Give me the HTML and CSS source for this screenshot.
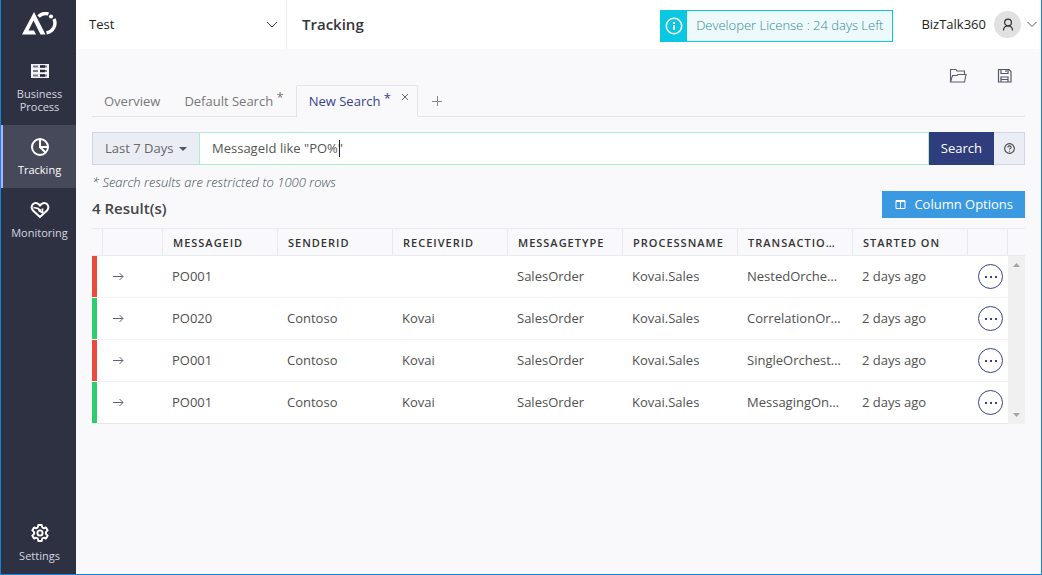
FILE: index.html
```html
<!DOCTYPE html>
<html lang="en">
<head>
<meta charset="utf-8">
<title>Tracking</title>
<link rel="stylesheet" href="styles.css">
</head>
<body>
<div class="app">
  <nav class="sidebar">
    <a class="logo" href="#" aria-label="Home">
      <svg width="36" height="24" viewBox="0 0 36 24" fill="none" stroke="#fff">
        <path d="M12 0L23.500 22.500H18.500L11.500 8.500L6.500 18.500H12L14 22.500H0Z" fill="#fff" stroke="none"/>
        <path d="M16.500 4.500A9.800 9.800 0 0 1 26.500 2M32 7A9.800 9.800 0 0 1 24.500 20.800" stroke-width="3.400"/>
        <circle cx="29" cy="4.500" r="2.100" fill="#fff" stroke="none"/>
      </svg>
    </a>
    <a class="nav-item" href="#">
      <svg width="20" height="20" viewBox="0 0 20 20"><path d="M1 3h18v14H1z" fill="#f4f4f8"/><path d="M3 5.500h14M3 10h14M3 14.500h14" stroke="#777987" stroke-width="2"/><path d="M10 5.500h5M10 10h5M10 14.500h5" stroke="#25283a" stroke-width="2.400"/><path d="M8 5.500h2M8 10h2M8 14.500h2" stroke="#fff" stroke-width="2"/></svg>
      <span>Business<br>Process</span>
    </a>
    <a class="nav-item active" href="#" aria-current="page">
      <svg width="20" height="20" viewBox="0 0 20 20" fill="none" stroke="#fff" stroke-width="2"><circle cx="10" cy="10" r="8"/><path d="M10 2v8h8M10 10l5.500 5.500"/></svg>
      <span>Tracking</span>
    </a>
    <a class="nav-item" href="#">
      <svg width="20" height="20" viewBox="0 0 20 20" fill="none" stroke="#fff" stroke-width="2"><path d="M10 17L3 10.500C-.5 6 4 1 8.500 4L10 5.500L11.500 4C16 1 20.500 6 17 10.500Z"/><path d="M3.500 7.500l4.500 1 1.500 2.500 3 1.500V8.500M7 8l4 2.500" stroke-width="1.700"/></svg>
      <span>Monitoring</span>
    </a>
    <a class="nav-item settings" href="#">
      <svg width="20" height="20" viewBox="0 0 20 20" fill="none" stroke="#fff" stroke-width="1.900" stroke-linejoin="round"><path d="M8.300 2h3.400l.5 2.400 1.500.9 2.300-.8 1.700 2.900-1.800 1.700v1.800l1.800 1.700-1.700 2.900-2.300-.8-1.500.9-.5 2.400H8.300l-.5-2.400-1.500-.9-2.300.8-1.700-2.900 1.800-1.700V9.100L2.300 7.400 4 4.500l2.300.8 1.500-.9z"/><circle cx="10" cy="10" r="2.600"/></svg>
      <span>Settings</span>
    </a>
  </nav>
  <div class="page">
    <header class="topbar">
      <div class="select-wrap environment">
        <select class="env-select" aria-label="Environment"><option>Test</option></select>
        <svg class="select-icon" width="12" height="8" viewBox="0 0 12 8" fill="none" stroke="#333"><path d="M1 1l5 5 5-5"/></svg>
      </div>
      <h1 class="title">Tracking</h1>
      <div class="license">
        <span class="license-icon"><svg width="18" height="18" viewBox="0 0 18 18" fill="none" stroke="#fff" stroke-width="1.500"><circle cx="9" cy="9" r="7.700"/><path d="M9 8v5M9 5v2" stroke-width="2"/></svg></span>
        <span class="license-text">Developer License : 24 days Left</span>
      </div>
      <button class="user" type="button">
        <span>BizTalk360</span>
        <span class="avatar"><svg width="12" height="14" viewBox="0 0 12 14" fill="none" stroke="#333" stroke-width="1.200"><circle cx="6" cy="4.500" r="3.400"/><path d="M1.500 12.500C1.500 9.500 3 8 6 8s4.500 1.500 4.500 4.500"/></svg></span>
        <svg width="10" height="7" viewBox="0 0 10 7" fill="none" stroke="#555"><path d="M.5 1L5 5.500 9.500 1"/></svg>
      </button>
    </header>
    <main class="content">
      <div class="toolbar">
        <button class="icon-btn" type="button" aria-label="Open"><svg width="18" height="16" viewBox="0 0 18 16" fill="none" stroke="#5b5c6d" stroke-width="1.100"><path d="M1.500 14V1.500H7l1 1.500h7.500v3.500M1.500 14l2-6.500H8l1-1h8L15.500 14z"/></svg></button>
        <button class="icon-btn" type="button" aria-label="Save"><svg width="16" height="16" viewBox="0 0 16 16" fill="none" stroke="#55566a" stroke-width="1.200"><path d="M1.500 1.500h10.500l2 2v10.500H1.500zM4 1.500v4h7v-4M4 14V9h7v5M4 11.500h7M9 2v2"/></svg></button>
      </div>
      <div class="tabs">
        <button class="tab" type="button">Overview</button>
        <button class="tab" type="button">Default Search <span class="star">*</span></button>
        <div class="tab current">
          <button class="tab-label" type="button">New Search <span class="star">*</span></button>
          <button class="close" type="button" aria-label="Close tab"><svg width="8" height="8" viewBox="0 0 8 8" stroke="#666"><path d="M1 1l6 6M7 1L1 7"/></svg></button>
        </div>
        <button class="tab add" type="button" aria-label="Add tab"><svg width="10" height="10" viewBox="0 0 10 10" stroke="#888"><path d="M0 5.500h10M5.500 0v10"/></svg></button>
      </div>
      <form class="search">
        <div class="select-wrap range">
          <select class="range-select" aria-label="Date range"><option>Last 7 Days</option></select>
          <svg class="select-icon" width="8" height="4" viewBox="0 0 8 4"><path d="M0 0h8L4 4z" fill="#555"/></svg>
        </div>
        <div class="query">
          <input class="query-input" type="text" aria-label="Search query" value="MessageId like &quot;PO%&quot;">
          <span class="caret"></span>
        </div>
        <button class="search-btn" type="button">Search</button>
        <button class="help-btn" type="button" aria-label="Help"><svg width="11" height="11" viewBox="0 0 10 10" fill="none" stroke="#444"><circle cx="5" cy="5" r="4.400"/><path d="M3.500 4C3.500 2.200 6.500 2.200 6.500 4 6.500 5 5 4.800 5 6M5 7v1"/></svg></button>
      </form>
      <p class="note">* Search results are restricted to 1000 rows</p>
      <div class="results-head">
        <h2 class="count">4 Result(s)</h2>
        <button class="columns-btn" type="button"><svg width="11" height="9" viewBox="0 0 11 9" fill="none" stroke="#fff"><path d="M1 .5h9v8H1zM1 1.500h9M5.500 1v7.500"/></svg>Column Options</button>
      </div>
      <table class="grid">
        <colgroup><col class="c-status"><col class="c-open"><col><col><col><col><col><col><col><col class="c-menu"><col class="c-scroll"></colgroup>
        <thead><tr><th></th><th></th><th>MESSAGEID</th><th>SENDERID</th><th>RECEIVERID</th><th>MESSAGETYPE</th><th>PROCESSNAME</th><th>TRANSACTIO…</th><th>STARTED ON</th><th></th><th></th></tr></thead>
        <tbody>
          <tr><td class="status bad"></td><td class="open"><svg width="11" height="9" viewBox="0 0 11 9" fill="none" stroke="#5f6570"><path d="M0 4.500h10M6.500 1L10 4.500 6.500 8"/></svg></td><td>PO001</td><td></td><td></td><td>SalesOrder</td><td>Kovai.Sales</td><td>NestedOrche…</td><td>2 days ago</td><td class="menu"><button class="more" type="button" aria-label="More"><i></i><i></i><i></i></button></td>
            <td class="scroll" rowspan="4"><div class="scrollbar"><svg width="7" height="4" viewBox="0 0 7 4"><path d="M0 4h7L3.500 0z" fill="#a3a3a3"/></svg><svg width="7" height="4" viewBox="0 0 7 4"><path d="M0 0h7L3.500 4z" fill="#a3a3a3"/></svg></div></td></tr>
          <tr><td class="status good"></td><td class="open"><svg width="11" height="9" viewBox="0 0 11 9" fill="none" stroke="#5f6570"><path d="M0 4.500h10M6.500 1L10 4.500 6.500 8"/></svg></td><td>PO020</td><td>Contoso</td><td>Kovai</td><td>SalesOrder</td><td>Kovai.Sales</td><td>CorrelationOr…</td><td>2 days ago</td><td class="menu"><button class="more" type="button" aria-label="More"><i></i><i></i><i></i></button></td></tr>
          <tr><td class="status bad"></td><td class="open"><svg width="11" height="9" viewBox="0 0 11 9" fill="none" stroke="#5f6570"><path d="M0 4.500h10M6.500 1L10 4.500 6.500 8"/></svg></td><td>PO001</td><td>Contoso</td><td>Kovai</td><td>SalesOrder</td><td>Kovai.Sales</td><td>SingleOrchest…</td><td>2 days ago</td><td class="menu"><button class="more" type="button" aria-label="More"><i></i><i></i><i></i></button></td></tr>
          <tr><td class="status good"></td><td class="open"><svg width="11" height="9" viewBox="0 0 11 9" fill="none" stroke="#5f6570"><path d="M0 4.500h10M6.500 1L10 4.500 6.500 8"/></svg></td><td>PO001</td><td>Contoso</td><td>Kovai</td><td>SalesOrder</td><td>Kovai.Sales</td><td>MessagingOn…</td><td>2 days ago</td><td class="menu"><button class="more" type="button" aria-label="More"><i></i><i></i><i></i></button></td></tr>
        </tbody>
      </table>
    </main>
  </div>
</div>
</body>
</html>
```
FILE: styles.css
```css
* { box-sizing: border-box; }
body { margin: 0; font-family: "Open Sans", sans-serif; font-size: 13px; line-height: 18px; color: #505050; }
button, input, select { font: inherit; color: inherit; border: 0; border-radius: 0; background: none; padding: 0; margin: 0; }
select { appearance: none; outline: 0; }
input { outline: 0; }
svg { display: block; flex: none; }
a { color: inherit; text-decoration: none; }

.app { display: flex; min-height: 100vh; border: 1px solid #1883d7; border-top: 0; background: #f9f9fb; }
.sidebar { flex: none; width: 75px; display: flex; flex-direction: column; background: #2e3142; color: #d5d6e0; }
.logo { display: flex; justify-content: center; padding: 12px 0 13px 2px; }
.nav-item { display: flex; flex-direction: column; align-items: center; gap: 6px; padding: 12px 0 12px 2px; font-size: 11px; line-height: 13px; text-align: center; }
.nav-item.active { background: #464959; box-shadow: inset 2px 0 #a8b4ff; color: #fff; font-weight: 500; }
.settings { margin-top: auto; }

.page { flex: 1; min-width: 0; }
.topbar { display: flex; align-items: center; height: 49px; background: #fff; }
.select-wrap { display: grid; align-items: center; }
.select-wrap > * { grid-area: 1 / 1; }
.select-icon { justify-self: end; pointer-events: none; }
.environment { width: 211px; align-self: stretch; border-right: 1px solid #ebebf0; color: #222; }
.environment .select-icon { margin-right: 8px; }
.env-select { width: 100%; height: 48px; padding-left: 13px; padding-bottom: 2px; }
.title { margin: 0 auto 0 15px; padding-bottom: 2px; font-size: 15px; font-weight: 600; color: #33343c; }
.license { display: flex; height: 32px; margin-top: 3px; border: 1px solid #0bc8e2; background: #eef9fb; color: #338996; font-weight: 300; }
.license-icon { display: flex; align-items: center; padding: 0 4px; background: #0bc8e2; }
.license-text { padding: 5px 9px; }
.user { display: flex; align-items: center; gap: 8px; margin: 0 4px 0 28px; color: #222; cursor: pointer; }
.user > span:first-child { padding-bottom: 2px; }
.avatar { display: flex; align-items: center; justify-content: center; width: 27px; height: 27px; border-radius: 50%; background: #e1e1e1; }
.user > svg { margin-left: -2px; }

.content { padding: 18px 16px; }
.toolbar { display: flex; justify-content: flex-end; gap: 30px; padding: 0 12px 0 0; }
.icon-btn { display: flex; align-items: center; height: 18px; }
.tabs { display: flex; height: 32px; border-bottom: 1px solid #e4e4e8; color: #777; }
.tab { display: flex; align-items: center; padding: 0 12px; white-space: pre; }
.tab.current { margin-bottom: -1px; border: 1px solid #e4e4e8; border-bottom: 0; border-radius: 2px 2px 0 0; background: #f9f9fb; color: #36428a; padding: 0 8px 1px 12px; gap: 10px; }
.tab-label, .close { display: flex; align-items: center; white-space: pre; }
.close { padding-bottom: 8px; }
.star { padding-bottom: 7px; }
.tab.add { padding: 0 14px; }

.search { display: flex; height: 33px; margin-top: 15px; }
.range { width: 107px; background: #ebedf5; border: 1px solid #d0d5e8; border-right: 0; color: #666; }
.range .select-icon { margin-right: 12px; }
.range-select { width: 100%; height: 31px; padding-left: 12px; padding-bottom: 2px; }
.query { position: relative; flex: 1; border: 1px solid #a9efc9; background: #fff; }
.query-input { width: 100%; height: 31px; padding: 0 12px 2px; color: #555; }
.caret { position: absolute; left: 139px; top: 7px; width: 1px; height: 17px; background: #222; }
.search-btn { padding: 0 12px 2px; background: #303d7d; color: #fff; font-weight: 500; }
.help-btn { width: 31px; display: flex; align-items: center; justify-content: center; border: 1px solid #d0d5e8; border-left: 0; background: #ebedf5; }
.note { margin: 8px 0 0; font-size: 13px; font-style: italic; font-weight: 300; color: #434b52; }
.results-head { display: flex; justify-content: space-between; height: 37px; }
.count { margin: 8px 0 0; font-size: 15px; font-weight: 600; color: #444; }
.columns-btn { display: flex; align-items: center; gap: 8px; height: 27px; padding: 0 12px 1px 13px; background: #3a99e0; color: #fff; font-weight: 500; }

.grid { width: 100%; table-layout: fixed; border-collapse: separate; border-spacing: 0; background: #fff; }
.c-status { width: 11px; }
.c-open { width: 60px; }
.c-menu { width: 40px; }
.c-scroll { width: 17px; }
th, td { padding: 0 10px; overflow: hidden; white-space: nowrap; text-align: left; border-bottom: 1px solid #f1f1f5; }
th { height: 28px; padding-top: 2px; border-top: 1px solid #e9e9f0; border-bottom-color: #e9e9f0; border-right: 1px solid #e9e9f0; background: #f9f9fb; font-size: 11px; line-height: 16px; font-weight: 600; letter-spacing: 1px; color: #333; }
th:first-child, th:nth-child(2), th:nth-child(10), th:last-child { padding: 0; }
th:last-child { border-right: 0; }
td { height: 42px; padding: 0 8px 2px 9px; }
td.open { padding: 0 10px; }
tr:last-child td { border-bottom-color: #e6e6ef; }
td.status { padding: 0; background-repeat: no-repeat; background-size: 5px 41px; }
.bad { background-image: linear-gradient(#e94c3d, #e94c3d); }
.good { background-image: linear-gradient(#2ecc71, #2ecc71); }
td.menu { padding: 0 4px 0 10px; }
.more { display: flex; align-items: center; justify-content: center; gap: 3px; width: 25px; height: 25px; border: 1px solid #36428a; border-radius: 50%; }
.more i { width: 2px; height: 2px; background: #36428a; }
td.scroll { padding: 0; height: 168px; background: #f0f0f0; }
.scrollbar { height: 167px; display: flex; flex-direction: column; align-items: center; justify-content: space-between; padding: 7px 0 6px; }
```
